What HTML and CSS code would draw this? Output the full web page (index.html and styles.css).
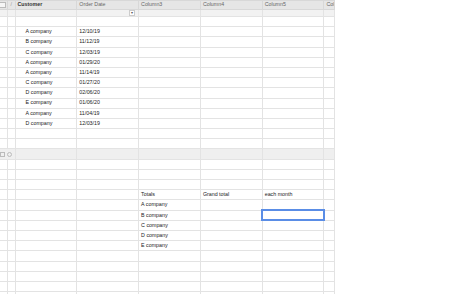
FILE: index.html
```html
<!DOCTYPE html>
<html lang="en">
<head>
  <meta charset="UTF-8" />
  <meta name="viewport" content="width=device-width, initial-scale=1.0"/>
  <title>Orders sheet</title>
  <link rel="stylesheet" href="styles.css">
</head>
<body>
  <table class="grade">
    <colgroup>
      <col class="c-check" />
      <col class="c-edit" />
      <col class="c-col" />
      <col class="c-col" />
      <col class="c-col" />
      <col class="c-col" />
      <col class="c-col" />
      <col class="c-last" />
    </colgroup>
    <thead>
      <tr class="cab">
        <th><span class="caixinha"></span></th>
        <th class="barra">/</th>
        <th class="forte">Customer</th>
        <th>Order Date</th>
        <th>Column3</th>
        <th>Column4</th>
        <th>Column5</th>
        <th>Col</th>
      </tr>
      <tr class="filtro">
        <td></td><td></td><td></td>
        <td class="com-seta"><span class="seta">&#9662;</span></td>
        <td></td><td></td><td></td><td></td>
      </tr>
    </thead>
    <tbody id="corpo"></tbody>
  </table>

  <script>
    const pedidos = [
      ["A company", "12/10/19"],
      ["B company", "11/12/19"],
      ["C company", "12/03/19"],
      ["A company", "01/29/20"],
      ["A company", "11/14/19"],
      ["C company", "01/27/20"],
      ["D company", "02/06/20"],
      ["E company", "01/06/20"],
      ["A company", "11/04/19"],
      ["D company", "12/03/19"]
    ];
    const totais = ["A company", "B company", "C company", "D company", "E company"];

    const corpo = document.getElementById("corpo");

    function linha(celulas, classe) {
      const tr = document.createElement("tr");
      if (classe) tr.className = classe;
      for (let i = 0; i < 8; i++) {
        const td = document.createElement("td");
        const c = celulas[i];
        if (c && typeof c === "object") {
          td.textContent = c.texto || "";
          td.className = c.classe;
        } else if (c) {
          td.textContent = c;
        }
        tr.appendChild(td);
      }
      corpo.appendChild(tr);
    }

    function vazias(n) {
      for (let i = 0; i < n; i++) linha([]);
    }

    vazias(1);
    pedidos.forEach(p => linha(["", "", { texto: p[0], classe: "recuo" }, p[1]]));
    vazias(2);

    const faixa = document.createElement("tr");
    faixa.className = "faixa";
    faixa.innerHTML = '<td colspan="2"><span class="icones"><span class="quad"></span><span class="bola"></span></span></td><td></td><td></td><td></td><td></td><td></td><td></td>';
    corpo.appendChild(faixa);

    vazias(3);
    linha(["", "", "", "", "Totals", "Grand total", "each month"]);
    totais.forEach((t, i) => {
      const cel = ["", "", "", "", t, ""];
      if (i === 1) cel.push({ texto: "", classe: "sel" });
      linha(cel);
    });
    vazias(5);
  </script>
</body>
</html>
```

FILE: styles.css
```css
body { margin: 0; background: #fff; font-family: "Liberation Sans", Arial, sans-serif; font-size: 5.3px; color: #222; overflow: hidden; }

.grade { border-collapse: collapse; table-layout: fixed; width: 335px; }
.c-check { width: 7px; }
.c-edit { width: 8px; }
.c-col { width: 61.8px; }
.c-last { width: 11px; }

.grade th, .grade td { border: 1px solid #e3e3e3; padding: 0 0 0 2px; height: 9.2px; white-space: nowrap; overflow: hidden; text-align: left; font-weight: normal; line-height: 1; }
.grade tr > :first-child { border-left: none; }

.cab th { height: 8px; background: #e6e6e6; color: #666; border-color: #d8d8d8; }
.cab .forte { color: #333; font-weight: bold; }
.cab .barra { color: #999; padding-left: 3px; }
.caixinha { display: block; width: 5px; height: 4px; border: 1px solid #bbb; border-left: none; background: #f6f6f6; margin-left: -2px; }

.filtro td { height: 6px; background: #f2f2f2; }
.com-seta { text-align: right; }
.seta { display: block; float: right; width: 4px; height: 4px; margin-right: 3px; background: #fff; border: 1px solid #ccc; color: #555; font-size: 4px; line-height: 4px; text-align: center; }

.recuo { padding-left: 10px !important; }

.faixa td { background: #efefef; height: 9.2px; }
.icones { display: flex; gap: 2px; align-items: center; }
.quad { width: 3px; height: 3px; border: 1px solid #bbb; margin-left: -2px; }
.bola { width: 3px; height: 3px; border: 1px solid #bbb; border-radius: 50%; }

.grade td.sel { outline: 2px solid #5a8de6; outline-offset: -1px; }
```
